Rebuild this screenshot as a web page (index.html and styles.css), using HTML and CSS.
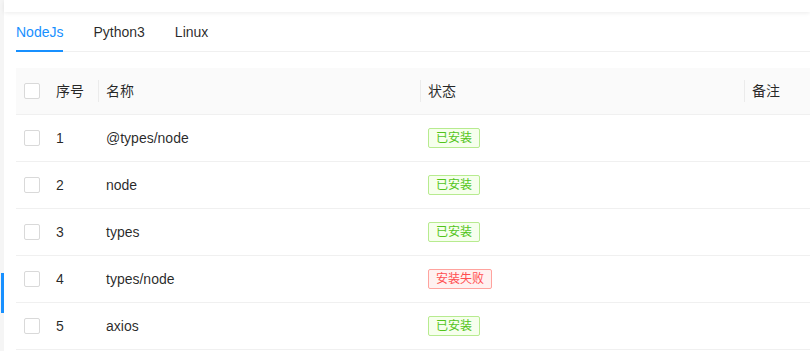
FILE: index.html
```html
<!DOCTYPE html>
<html>
<head>
    <meta charset="UTF-8">
    <title>依赖管理</title>
    <link rel="stylesheet" href="styles.css">
</head>
<body>
    <div class="topbar"></div>
    <div class="side-mark"></div>
    <div class="page">
        <div class="tabs">
            <div class="tab tab-active">NodeJs</div>
            <div class="tab">Python3</div>
            <div class="tab">Linux</div>
        </div>

        <table class="deps">
            <thead>
                <tr>
                    <th class="col-check"><span class="checkbox"></span></th>
                    <th class="col-num">序号</th>
                    <th class="col-name"><span class="sep"></span>名称</th>
                    <th class="col-status"><span class="sep"></span>状态</th>
                    <th class="col-remark"><span class="sep"></span>备注</th>
                </tr>
            </thead>
            <tbody>
                <tr>
                    <td class="col-check"><span class="checkbox"></span></td>
                    <td>1</td>
                    <td>@types/node</td>
                    <td><span class="tag tag-ok">已安装</span></td>
                    <td></td>
                </tr>
                <tr>
                    <td class="col-check"><span class="checkbox"></span></td>
                    <td>2</td>
                    <td>node</td>
                    <td><span class="tag tag-ok">已安装</span></td>
                    <td></td>
                </tr>
                <tr>
                    <td class="col-check"><span class="checkbox"></span></td>
                    <td>3</td>
                    <td>types</td>
                    <td><span class="tag tag-ok">已安装</span></td>
                    <td></td>
                </tr>
                <tr>
                    <td class="col-check"><span class="checkbox"></span></td>
                    <td>4</td>
                    <td>types/node</td>
                    <td><span class="tag tag-fail">安装失败</span></td>
                    <td></td>
                </tr>
                <tr>
                    <td class="col-check"><span class="checkbox"></span></td>
                    <td>5</td>
                    <td>axios</td>
                    <td><span class="tag tag-ok">已安装</span></td>
                    <td></td>
                </tr>
            </tbody>
        </table>
    </div>
</body>
</html>
```

FILE: styles.css
```css
html, body {
    margin: 0;
    padding: 0;
    overflow: hidden;
}

body {
    background: #f5f5f5;
    font-family: "Liberation Sans", "Noto Sans CJK SC", sans-serif;
    font-size: 14px;
    line-height: 22px;
    color: rgba(0, 0, 0, 0.85);
}

.topbar {
    height: 12px;
    margin-left: 4px;
    background: #fff;
    box-shadow: 0 1px 4px rgba(0, 0, 0, 0.08);
    position: relative;
    z-index: 1;
}

.side-mark {
    position: absolute;
    left: 1px;
    top: 273px;
    width: 3px;
    height: 40px;
    background: #1890ff;
}

.page {
    margin-left: 4px;
    padding: 1px 0 0 12px;
    background: #fff;
    height: 400px;
}

.tabs {
    display: flex;
    gap: 30px;
    border-bottom: 1px solid #f0f0f0;
    margin-bottom: 16px;
}

.tab {
    padding: 8px 0 7px;
    border-bottom: 2px solid transparent;
    margin-bottom: -1px;
    color: rgba(0, 0, 0, 0.85);
}

.tab-active {
    color: #1890ff;
    border-bottom-color: #1890ff;
}

.deps {
    border-collapse: collapse;
    width: 1000px;
    table-layout: fixed;
}

.deps th,
.deps td {
    padding: 12px 8px;
    height: 22px;
    text-align: left;
    font-weight: normal;
    border-bottom: 1px solid #f0f0f0;
    white-space: nowrap;
    vertical-align: top;
}

.deps th {
    background: #fafafa;
    position: relative;
}

.col-check {
    width: 16px;
}

.col-num {
    width: 34px;
}

.col-name {
    width: 306px;
}

.col-status {
    width: 308px;
}

.sep {
    position: absolute;
    left: 0;
    top: 50%;
    width: 1px;
    height: 22px;
    margin-top: -11px;
    background: rgba(0, 0, 0, 0.06);
}

.checkbox {
    display: block;
    width: 14px;
    height: 14px;
    margin-top: 3px;
    border: 1px solid #d9d9d9;
    border-radius: 2px;
    background: #fff;
}

.tag {
    display: inline-block;
    font-size: 12px;
    line-height: 18px;
    padding: 0 7px;
    margin-top: 1px;
    border: 1px solid;
    border-radius: 2px;
    vertical-align: top;
}

.tag-ok {
    color: #52c41a;
    background: #f6ffed;
    border-color: #b7eb8f;
}

.tag-fail {
    color: #ff4d4f;
    background: #fff1f0;
    border-color: #ffa39e;
}
```
